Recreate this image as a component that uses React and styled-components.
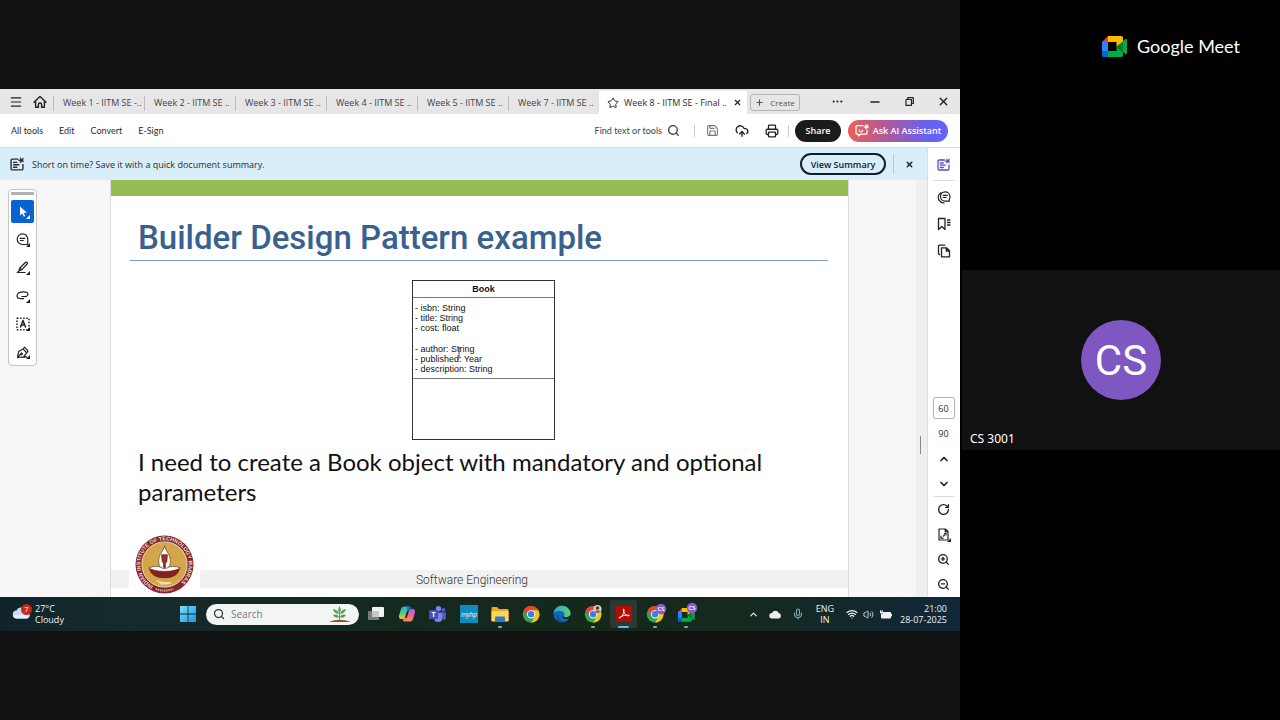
import React from 'react';
import styled, { createGlobalStyle, css } from 'styled-components';
import {
  Menu, Search, Star, X, Plus, Minus, Printer, Save, CloudUpload, Ellipsis,
  ChevronUp, ChevronDown, RotateCw, ZoomIn, ZoomOut, Wifi, Volume2, Mic,
} from 'lucide-react';

const GlobalStyle = createGlobalStyle`
  * {
    box-sizing: border-box;
  }

  body {
    margin: 0;
    background: #000;
    font-family: "Open Sans", "Noto Sans", sans-serif;
    font-size: 9px;
  }

  button, input {
    font: inherit;
    color: inherit;
    border: 0;
    padding: 0;
    margin: 0;
    background: none;
  }

  svg {
    display: block;
    flex: none;
  }
`;

const Page = styled.div`
  display: grid;
  grid-template-columns: 3fr 1fr;
  min-height: 100vh;
`;

const Stage = styled.main`
  display: flex;
  align-items: center;
  background: #111;
  min-width: 0;
`;

const Desktop = styled.div`
  display: flex;
  flex-direction: column;
  width: 100%;
  min-width: 0;
  color: #2c2c2c;
`;

/* tab strip */

const TabStrip = styled.header`
  display: flex;
  align-items: stretch;
  height: 25px;
  background: #e6e6e6;
`;

const IconButton = styled.button`
  display: flex;
  align-items: center;
  justify-content: center;
  width: ${props => props.$w || 24}px;
  height: ${props => props.$h ? `${props.$h}px` : 'auto'};
  color: ${props => props.$color || '#222'};
`;

const StripStart = styled.div`
  display: flex;
  padding-left: 4px;
  width: 53px;
`;

const Tab = styled.button`
  width: 91px;
  padding: 2px 0 0 10px;
  text-align: left;
  white-space: nowrap;
  overflow: hidden;
  color: #444;
  background: linear-gradient(#bbb, #bbb) left 7px / 1px 15px no-repeat;
`;

const ActiveTab = styled.div`
  display: flex;
  align-items: center;
  gap: 5px;
  width: 148px;
  margin-top: 2px;
  padding: 0 3px 0 8px;
  white-space: nowrap;
  background: #fff;

  button:first-of-type {
    margin-right: auto;
  }
`;

const CreateButton = styled.button`
  display: flex;
  align-items: center;
  justify-content: center;
  align-self: center;
  gap: 6px;
  width: 50px;
  height: 17px;
  margin: 2px auto 0 3px;
  border: 1px solid #b4b4b4;
  border-radius: 3px;
  font-size: 8px;
  color: #555;
`;

/* toolbar */

const Toolbar = styled.div`
  display: flex;
  align-items: center;
  height: 34px;
  padding: 0 12px 0 11px;
  background: #fff;
  border-bottom: 1px solid #dcdfe2;
`;

const MenuBar = styled.nav`
  display: flex;
  gap: 16px;
  margin-right: auto;
  font-family: Lato, "Open Sans", sans-serif;
`;

const FindButton = styled.button`
  display: flex;
  align-items: center;
  gap: 5px;
  margin-right: 14px;
  font-family: Lato, "Open Sans", sans-serif;
  color: #444;
`;

const Divider = styled.span`
  width: 1px;
  height: ${props => props.$h || 12}px;
  background: ${props => props.$color || '#ccc'};
`;

const Pill = styled.button`
  display: flex;
  align-items: center;
  justify-content: center;
  gap: 4px;
  height: 22px;
  width: ${props => props.$w}px;
  border-radius: 11px;
  font-weight: 600;
  white-space: nowrap;

  ${props => props.$kind === 'dark' && css`
    color: #fff;
    background: #1b1b1b;
    margin: 0 7px 0 6px;
  `}

  ${props => props.$kind === 'ai' && css`
    color: #fff;
    background: linear-gradient(90deg, #ee5f55, #a35aa6 45%, #6562f5 80%);
  `}

  ${props => props.$kind === 'outline' && css`
    border: 2px solid #12202a;
    color: #12202a;
    margin-right: 7px;
  `}
`;

/* viewer */

const Viewer = styled.div`
  display: flex;
  background: #fff;
`;

const ViewerMain = styled.div`
  flex: 1;
  min-width: 0;
`;

const Banner = styled.div`
  display: flex;
  align-items: center;
  height: 32px;
  padding: 0 3px 0 10px;
  background: #d9eefb;

  p {
    margin: 0 auto 0 8px;
  }
`;

const Canvas = styled.div`
  display: flex;
  background: #f7f7f7;
`;

const ToolGutter = styled.div`
  width: 110px;
  padding: 9px 8px;
`;

const ToolPalette = styled.div`
  display: flex;
  flex-direction: column;
  align-items: center;
  gap: 5px;
  width: 29px;
  padding: 2px 0;
  background: #fff;
  border: 1px solid #c6c6c6;
  border-radius: 4px;
`;

const Grip = styled.span`
  width: 23px;
  height: 3px;
  background: #b1b1b1;
`;

const Tool = styled.button`
  display: flex;
  align-items: center;
  justify-content: center;
  width: 23px;
  height: 23px;
  border-radius: 2px;
  color: ${props => props.$active ? '#fff' : '#222'};
  background: ${props => props.$active ? '#0862d1' : 'none'};
`;

const ScrollTrack = styled.div`
  width: 11px;
  margin-left: 67px;
  padding: 256px 0 0 4px;
  background: #efefef;
`;

const ScrollThumb = styled.div`
  width: 1px;
  height: 18px;
  background: #888;
`;

const Rail = styled.aside`
  display: flex;
  flex-direction: column;
  align-items: center;
  justify-content: space-between;
  width: 33px;
  padding: 3px 1px 0 0;
  border-left: 1px solid #ddd;
`;

const RailGroup = styled.div`
  display: flex;
  flex-direction: column;
  align-items: center;

  hr {
    width: 22px;
    margin: ${props => props.$loose ? '2px 0' : 0};
    border: 0;
    border-top: 1px solid #ddd;
  }
`;

const PageInput = styled.input`
  width: 22px;
  height: 22px;
  margin-bottom: 2px;
  text-align: center;
  border: 1px solid #b5b5b5;
  border-radius: 2px;
`;

const PageCount = styled.span`
  line-height: 25px;
`;

/* slide */

const Slide = styled.article`
  display: flex;
  flex-direction: column;
  flex: 1;
  min-width: 0;
  background: #fff;
  border: solid #ddd;
  border-width: 0 1px;
`;

const SlideAccent = styled.div`
  height: 16px;
  background: #97bb55;
`;

const SlideTitle = styled.h1`
  margin: 20px 20px 19px 19px;
  padding: 0 0 1px 8px;
  border-bottom: 1px solid #7f9fc4;
  font-family: Roboto, sans-serif;
  font-weight: 500;
  font-size: 33px;
  line-height: 43px;
  color: #39618f;
`;

const ClassBox = styled.section`
  position: relative;
  width: 143px;
  height: 160px;
  margin-left: 301px;
  border: 1px solid #333;
  font-family: "Liberation Sans", Arial, sans-serif;
  font-size: 9px;
  line-height: 10px;
  color: #111;

  h2 {
    margin: 0;
    font-size: 9px;
    line-height: 16px;
    text-align: center;
    border-bottom: 1px solid #777;
  }

  ul {
    list-style: none;
    margin: 0;
    padding: 5px 2px 4px;
    border-bottom: 1px solid #777;
  }

  li:nth-child(4) {
    margin-top: 11px;
  }
`;

const TextCursor = styled.svg`
  position: absolute;
  left: 43px;
  top: 66px;
`;

const SlideText = styled.p`
  margin: 7px 27px 0;
  font-family: Lato, sans-serif;
  font-size: 24px;
  line-height: 30px;
  color: #111;
`;

const SlideFooter = styled.footer`
  display: flex;
  align-items: flex-end;
  margin-top: 28px;
  padding-bottom: 3px;
`;

const FooterBand = styled.div`
  flex: ${props => props.$w ? `0 0 ${props.$w}px` : 1};
  height: 18px;
  margin-bottom: 6px;
  padding-left: ${props => props.$w ? 0 : 216}px;
  background: #f1f1f1;
  font-family: Roboto, sans-serif;
  font-weight: 300;
  font-size: 12px;
  line-height: 20px;
  color: #333;
`;

const SealHolder = styled.div`
  padding: 0 6px;
`;

/* taskbar */

const Taskbar = styled.footer`
  display: flex;
  align-items: center;
  height: 34px;
  padding-right: 13px;
  color: #f2f2f2;
  line-height: 11px;
  background: linear-gradient(90deg, #10232b, #152a2c 12%, #14291f 38%, #16281c 62%, #15291f 78%, #10283a);
`;

const Weather = styled.button`
  display: flex;
  align-items: center;
  gap: 2px;
  width: 172px;
  padding-left: 11px;
  text-align: left;
`;

const SearchBox = styled.label`
  display: flex;
  align-items: center;
  gap: 6px;
  width: 153px;
  height: 21px;
  margin: 0 1px 0 2px;
  padding: 0 8px 0 7px;
  border-radius: 11px;
  background: #f3f5f4;
  color: #333;

  input {
    flex: 1;
    min-width: 0;
    font-size: 10px;
    outline: none;
  }

  input::placeholder {
    color: #777;
  }
`;

const TaskButton = styled.button`
  display: flex;
  flex-direction: column;
  align-items: center;
  justify-content: flex-end;
  gap: 3px;
  width: 27px;
  height: 28px;
  margin: 0 2px;
  border-radius: 3px;
  background: ${props => props.$active ? '#2a3a33' : 'none'};

  &::after {
    content: '';
    width: ${props => props.$active ? 11 : 4}px;
    height: 2px;
    border-radius: 1px;
    background: ${props => props.$active ? '#5cc0ea' : props.$open ? '#9a9f9d' : 'transparent'};
  }
`;

const Tray = styled.div`
  display: flex;
  align-items: center;
  margin-left: auto;
`;

const Language = styled.button`
  width: 32px;
  line-height: 11px;
  margin-right: 2px;
`;

const Clock = styled.div`
  width: 52px;
  text-align: right;
`;

/* meet panel */

const MeetPanel = styled.aside`
  display: grid;
  grid-template-rows: 1fr auto 1fr;
  padding-left: 2px;
  color: #fff;
`;

const MeetBrand = styled.div`
  display: flex;
  align-items: center;
  align-self: start;
  justify-content: flex-end;
  gap: 10px;
  padding: 34px 40px 0 0;
  font-family: Lato, sans-serif;
  font-size: 18px;
  line-height: 24px;
`;

const Tile = styled.section`
  position: relative;
  display: flex;
  align-items: center;
  justify-content: center;
  min-height: 180px;
  background: #111;
`;

const Avatar = styled.div`
  width: 80px;
  height: 80px;
  border-radius: 50%;
  background: #7e57c2;
  font-family: Roboto, sans-serif;
  font-size: 42px;
  line-height: 82px;
  text-align: center;
`;

const TileName = styled.span`
  position: absolute;
  left: 8px;
  bottom: 3px;
  font-family: "Noto Sans", sans-serif;
  font-size: 12px;
  line-height: 16px;
`;

const Line = styled.svg.attrs({ fill: 'none', stroke: 'currentColor', strokeLinecap: 'round', strokeLinejoin: 'round' })`
  overflow: visible;
`;

const HomeIcon = () => (
  <Line width="14" height="14" viewBox="0 0 14 14" strokeWidth="1.4">
    <path d="M1 7.2 7 1.5l6 5.7M2.6 6v6.2h2.8V9.6a1.6 1.6 0 0 1 3.2 0v2.6h2.8V6" />
  </Line>
);

const SummaryIcon = ({ size = 13 }) => (
  <Line width={size} height={size} viewBox="0 0 13 13" strokeWidth="1.3">
    <path d="M7.5 2H2.2Q1 2 1 3.2v7.6Q1 12 2.2 12h8.6q1.2 0 1.2-1.2V7M3.3 5h3M3.3 7.2h5M3.3 9.5h3" />
    <path fill="currentColor" strokeWidth=".5" d="m10 .8.7 1.5L12.5 1l-.6 2 .9 1.3-1.8-.1L9.8 5.5l-.3-1.7-1.7-.6 1.7-.8z" />
  </Line>
);

const AssistantIcon = () => (
  <Line width="14" height="13" viewBox="0 0 14 13" strokeWidth="1.3">
    <path d="M8 1.7H2.2Q1 1.7 1 2.9v6q0 1.2 1.2 1.2h1.3v2l2.3-2h5q1.2 0 1.2-1.2V6.5M4.2 5.9h.1M7.4 5.9h.1M4.3 7.3q1.6 1 3.2 0" />
    <path fill="currentColor" strokeWidth=".5" d="m10.8.5.6 1.5L13.3 1l-.6 1.9 1 1.2-1.8-.1-1.2 1.3-.3-1.7-1.7-.5 1.7-.8z" />
  </Line>
);

const RestoreIcon = () => (
  <Line width="9" height="9" viewBox="0 0 9 9" strokeWidth="1.2">
    <path d="M1 2.5h5.5V8.3H1zM2.7 2.3V.7h5.6v5.8H6.7" />
  </Line>
);

const Corner = () => <path d="M15 11v4h-4z" fill="currentColor" stroke="none" />;

const ToolIcon = ({ children }) => (
  <Line width="16" height="16" viewBox="0 0 16 16" strokeWidth="1.2">
    {children}
    <Corner />
  </Line>
);

const tools = [
  ['Select', <path fill="currentColor" stroke="none" d="M5 2.5v9l2.3-2 1.5 3.2 1.4-.7-1.5-3.1 3.1-.3z" />],
  ['Comment', <path d="M12.7 12.5H7.5a5.3 5.3 0 1 1 5.3-5.2zM5.3 6.3h4.5M5.3 8.5h3" />],
  ['Highlight', <path d="m4 11 .8-3 5.8-5.7q1.5-.5 1.9 1.2L6.9 9.7zM5 8.2l1.8 1.6M2.2 12.5h8M4 11l-1.5 1.3" />],
  ['Draw', <path d="M8.5 10.7H5.6C3 10.7 1.8 9.2 2 7.5c.3-2.4 3-3.7 6.5-3.7 3 0 4.6 1.2 4.4 2.7-.2 1.4-2 2.2-4.5 2H6.8" />],
  ['Add text', (
    <>
      <path strokeWidth="1.5" strokeDasharray="1.5 1.6" strokeLinecap="butt" d="M2 2.3h12v11.5H2z" />
      <path strokeWidth="1.5" d="m5.5 11 2.5-6.5L10.5 11M6.5 9h3" />
    </>
  )],
  ['Sign', <path d="m2.5 13.5 1.2-6 4.4-2.6 3.6 4-3 4zM8.1 4.9l1.6-1.7 3.3 3.7-1.3 2M2.5 13.5l4-4.4M6.5 9.1a.8.8 0 1 0 .1 0M9 13.5q2-1.5 3-.2" />],
];

const CommentsIcon = () => (
  <Line width="14" height="14" viewBox="0 0 14 14" strokeWidth="1.2">
    <path d="M12.3 11.2H8.3A4.7 4.7 0 1 1 12.9 6.4q.1 1.600-.6 2.600zM6.3 5.3h4M6.3 7.5h3M4 2.7C.5 4.5.2 9.5 3.5 11.8q1.2 1 3.5 1.1" />
  </Line>
);

const BookmarksIcon = () => (
  <Line width="14" height="14" viewBox="0 0 14 14" strokeWidth="1.3">
    <path d="M1.5 1.5h6.5v11L4.8 9.6l-3.3 2.9zM10.5 3H13M10.5 5.5H13M10.5 8H13" />
  </Line>
);

const PagesIcon = () => (
  <Line width="14" height="14" viewBox="0 0 14 14" strokeWidth="1.3">
    <path d="M4.5 3.8h5l3 3v6h-8zM9.3 4v3h3M2.5 10.5q-1-.2-1-1.2V2.5q0-1.3 1.3-1.3h5" />
  </Line>
);

const PageViewIcon = () => (
  <Line width="16" height="16" viewBox="0 0 16 16" strokeWidth="1.2">
    <path d="M3 2h6.5L12 4.5V13H3zM9.2 2.2v2.6H12M5 9.2v2h2M10 8V6.5H8.5M7.5 9l1-1" />
    <Corner />
  </Line>
);

const Seal = () => (
  <svg width="59" height="59" viewBox="0 0 60 60">
    <defs>
      <path id="seal-arc" d="M18.6 51.8A24.6 24.6 0 1 1 41.4 51.8" />
    </defs>
    <circle cx="30" cy="30" r="29.5" fill="#84272b" />
    <circle cx="30" cy="30" r="23" fill="#d3a64c" stroke="#ecd9b4" strokeWidth="1" />
    <text fill="#f3dfd3" fontFamily="Liberation Sans, sans-serif" fontWeight="700" fontSize="5.5">
      <textPath href="#seal-arc">INDIAN INSTITUTE OF TECHNOLOGY MADRAS</textPath>
    </text>
    <path d="M21 54.8q9 3.6 18 0" fill="none" stroke="#d9a79c" strokeWidth="2" strokeDasharray="1.5 .7" />
    <path d="M30 11c-1 6-6 8-6 15 0 5 2 9 6 9s6-4 6-9c0-7-5-9-6-15z" fill="#fff" stroke="#5b4a3a" strokeWidth=".8" />
    <path d="M27 20h6l-.6 7-1.4 2v4h-2v-4l-1.4-2z" fill="#a92a20" stroke="#4c1512" strokeWidth=".6" />
    <path d="M14 33.5q8-3.5 14.5.5h3q6.5-4 14.5-.5-5 3.5-16 3.5t-16-3.5z" fill="#fff" stroke="#5b3a2a" strokeWidth=".7" />
    <path d="M14 34q16 6 32 0-3 10-16 10T14 34z" fill="#84211f" />
    <path d="M22 46.5q7 3.5 14 1.5M25 49.5q6 1 12-1" fill="none" stroke="#f4e5b8" strokeWidth="1.2" />
  </svg>
);

const WeatherIcon = () => (
  <svg width="22" height="20" viewBox="0 0 22 20">
    <path d="M6 14.5a4 4 0 0 1-.5-8 5 5 0 0 1 9.3.6 3.8 3.8 0 0 1 1.2 7.4z" fill="#c6dcf7" />
    <path d="M2.2 11.5q9-1 16.5-.8-.6 3.8-3 3.8H6q-3.2 0-3.8-3z" fill="#e6f0fc" />
    <circle cx="15.5" cy="5.5" r="5.5" fill="#c42b1c" />
    <text x="15.5" y="8.2" textAnchor="middle" fontSize="7.5" fill="#fff">7</text>
  </svg>
);

const WindowsIcon = () => (
  <svg width="16" height="16" viewBox="0 0 16 16">
    <linearGradient id="win" x1="0" y1="0" x2="1" y2="1">
      <stop stopColor="#7ddcfb" />
      <stop offset="1" stopColor="#159be6" />
    </linearGradient>
    <path fill="url(#win)" d="M0 0h7.6v7.6H0zM8.4 0H16v7.6H8.4zM0 8.4h7.6V16H0zM8.4 8.4H16V16H8.4z" />
  </svg>
);

const PlantIcon = () => (
  <svg width="23" height="17" viewBox="0 0 23 17">
    <path d="M1 16q10-4.5 22 0z" fill="#8a5333" />
    <g fill="#4fa052">
      <path d="M11.5 0q2.5 4 0 7.5Q9 4 11.5 0zM5 3q4.5.5 6 5Q6 7.5 5 3zM18 3q-4.5.5-6 5 5-.5 6-5zM5 9q4-1.5 6.2 2Q7.5 13 5 9zM18 9q-4-1.5-6.2 2 3.7 2 6.2-2z" />
      <path d="M11 5h1v9.5h-1z" />
    </g>
  </svg>
);

const Badge = ({ x = 15, y = 4 }) => (
  <g>
    <circle cx={x} cy={y} r="5.2" fill="#8460c4" />
    <text x={x} y={y + 2} textAnchor="middle" fontSize="6" fontWeight="600" fill="#fff">CS</text>
  </g>
);

const Glyph = styled.svg.attrs({ width: 18, height: 18, viewBox: '0 0 18 18' })`
  overflow: visible;
`;

const TaskView = () => (
  <Glyph>
    <rect x="1" y="6" width="11" height="9" fill="#777d7d" />
    <rect x="5" y="2" width="12" height="10" rx="1" fill="#f0f2f2" />
    <rect x="5" y="6" width="7" height="6" fill="#c5c9c9" />
  </Glyph>
);

const Copilot = () => (
  <Glyph>
    <linearGradient id="cop-a" x1="0" y1="0" x2="0" y2="1">
      <stop stopColor="#2aa7ea" /><stop offset=".5" stopColor="#52c777" /><stop offset="1" stopColor="#f2c230" />
    </linearGradient>
    <linearGradient id="cop-b" x1="0" y1="0" x2="0" y2="1">
      <stop stopColor="#a56af0" /><stop offset=".5" stopColor="#f0609a" /><stop offset="1" stopColor="#f5904a" />
    </linearGradient>
    <path d="M6 1.5h5q1.6 0 2 1.6l.5 1.9H11q-1.6 0-2.2 1.6L7 12.5q-.6 1.5-2 1.5H3.5C1 14 .6 12 1.2 10L3 4q.7-2.5 3-2.5z" fill="url(#cop-a)" />
    <path d="M12 16.5H7q-1.6 0-2-1.6L4.6 13H7q1.6 0 2.2-1.6L11 5.5Q11.6 4 13 4h1.5c2.5 0 2.9 2 2.3 4L15 14q-.7 2.5-3 2.5z" fill="url(#cop-b)" />
    <path d="M11 1.5q1.6 0 2 1.6l.5 1.9H11q-1 0-1.5.8L9 3q0-1.5 2-1.5z" fill="#2564c8" />
  </Glyph>
);

const Teams = () => (
  <Glyph>
    <circle cx="14.5" cy="5" r="2" fill="#5059c9" />
    <circle cx="9.5" cy="3.7" r="2.7" fill="#7b83eb" />
    <path d="M12 7.5h5v5q0 2.5-3 2.5z" fill="#5059c9" />
    <path d="M5 7.5h8.5v5q0 4.5-4.3 4.5T5 12.5z" fill="#7b83eb" />
    <rect x="0" y="5" width="9" height="9" rx="1" fill="#464eb8" />
    <text x="4.5" y="12" textAnchor="middle" fontSize="7" fontWeight="700" fill="#fff">T</text>
  </Glyph>
);

const MyHp = () => (
  <Glyph>
    <rect width="18" height="18" fill="#0e8cc0" />
    <text x="9" y="11.5" textAnchor="middle" fontSize="6.5" fontStyle="italic" fill="#fff">myhp</text>
  </Glyph>
);

const Explorer = () => (
  <Glyph>
    <path d="M.5 3q0-1 1-1H6l2 2h8.5q1 0 1 1v11H.5z" fill="#e9a820" />
    <path d="M.5 6h17v9.5q0 1-1 1h-15q-1 0-1-1z" fill="#fbd55c" />
    <path d="M4 16.5v-4q0-1 1-1h8q1 0 1 1v4z" fill="#2b7cc4" />
  </Glyph>
);

const Chrome = ({ children }) => (
  <Glyph>
    <g transform="translate(0 .2) scale(.38)">
      <circle cx="24" cy="24" r="22" fill="#34a350" />
      <path d="M4.95 13a22 22 0 0 1 38.1 0H24v11l-9.5 5.5z" fill="#e94435" />
      <path d="M43.05 13A22 22 0 0 1 24 46l9.5-16.5L24 24V13z" fill="#fbc116" />
      <circle cx="24" cy="24" r="11" fill="#fff" />
      <circle cx="24" cy="24" r="8.5" fill="#3c7de6" />
    </g>
    {children}
  </Glyph>
);

const Edge = () => (
  <Glyph>
    <linearGradient id="edge" x1="0" y1="0" x2="1" y2="0">
      <stop stopColor="#2aa5e0" /><stop offset="1" stopColor="#5dd267" />
    </linearGradient>
    <circle cx="9" cy="9" r="8.5" fill="#1466b8" />
    <path d="M.6 8A8.5 8.5 0 0 1 17.5 8.5q0 3.8-4 3.8-2.8 0-2.5-1.5.7-1 .2-2.5C10 5.3 4 4.5.6 8z" fill="url(#edge)" />
    <path d="M9.5 12.8q2.5 2.2 6.5.7l1 1.5 1-3-1-1.5q-2 2.3-5 1.7-1.5-.3-1-1.7-1.8.8-1.5 2.3z" fill="#14291f" />
    <path d="M6 8.5c-2 4 1 8 5.5 8.5a8.5 8.5 0 0 1-4-.2C3.5 15.5 2.5 11 6 8.5z" fill="#0c4691" />
  </Glyph>
);

const Acrobat = () => (
  <Glyph>
    <rect x="1" y="1" width="16" height="16" rx="2" fill="#b30b00" />
    <path d="M4.5 13c2.5-1 4.7-4.5 4.6-8.2 0-1-1-1-.9 0 .3 3.4 2.8 6 5.5 6.2.8 0 .8-.9 0-.9-3-.2-6.5.6-9 2-.8.5-.6 1.1-.2.9z" fill="none" stroke="#fff" strokeWidth=".9" />
  </Glyph>
);

const MeetShape = () => (
  <>
    <path d="M0 6 6 0v6z" fill="#ea4335" />
    <path d="M0 6h6v9H0z" fill="#2684fc" />
    <path d="M0 15h6v6H1.5Q0 21 0 19.5z" fill="#0066da" />
    <path d="M6 0h13q2 0 2 2v4.5L14.5 11V6H6z" fill="#ffba00" />
    <path d="M6 15h8.5v-4.5L21 16v3q0 2-2 2H6z" fill="#00ac47" />
    <path d="m14.5 10.5 9-7.3q1.5-.8 1.5.8v13q0 1.6-1.5.8z" fill="#00832d" />
    <path d="m21 5.3 2.5-2.1q1.5-.8 1.5.8v13q0 1.6-1.5.8L21 15.7z" fill="#10a544" />
  </>
);

const MeetTask = () => (
  <Glyph>
    <g transform="translate(1 3) scale(.66)"><MeetShape /></g>
    <Badge x={15} y={3} />
  </Glyph>
);

const ChromeProfile = () => (
  <Chrome>
    <circle cx="13.5" cy="4" r="4" fill="#d7d2cd" />
    <circle cx="13.5" cy="3" r="1.8" fill="#4a3c36" />
    <path d="M10.5 6.5q3-3 6 0-3 3-6 0z" fill="#8f6a5b" />
  </Chrome>
);

const ChromeCs = () => <Chrome><Badge /></Chrome>;

const apps = [
  { name: 'Task view', icon: TaskView },
  { name: 'Copilot', icon: Copilot },
  { name: 'Teams', icon: Teams },
  { name: 'myHP', icon: MyHp },
  { name: 'File Explorer', icon: Explorer, open: true },
  { name: 'Chrome', icon: Chrome },
  { name: 'Edge', icon: Edge },
  { name: 'Chrome profile', icon: ChromeProfile, open: true },
  { name: 'Acrobat', icon: Acrobat, active: true },
  { name: 'Chrome CS', icon: ChromeCs, open: true },
  { name: 'Meet', icon: MeetTask, open: true },
];

const tabs = [
  'Week 1 - IITM SE -..',
  'Week 2 - IITM SE ..',
  'Week 3 - IITM SE ..',
  'Week 4 - IITM SE ..',
  'Week 5 - IITM SE ..',
  'Week 7 - IITM SE ..',
];

const fields = [
  'isbn: String', 'title: String', 'cost: float',
  'author: String', 'published: Year', 'description: String',
];

const TopTabs = () => (
  <TabStrip>
    <StripStart>
      <IconButton aria-label="Menu"><Menu size={14} strokeWidth={2} /></IconButton>
      <IconButton $w={27} aria-label="Home"><HomeIcon /></IconButton>
    </StripStart>
    {tabs.map(tab => <Tab key={tab}>{tab}</Tab>)}
    <ActiveTab>
      <Star size={12} strokeWidth={2} />
      <button>Week 8 - IITM SE - Final ..</button>
      <IconButton $w={14} aria-label="Close tab"><X size={9} strokeWidth={3} /></IconButton>
    </ActiveTab>
    <CreateButton><Plus size={9} strokeWidth={3} />Create</CreateButton>
    <IconButton $w={40} aria-label="More"><Ellipsis size={13} /></IconButton>
    <IconButton $w={35} aria-label="Minimize"><Minus size={14} strokeWidth={2.5} /></IconButton>
    <IconButton $w={34} aria-label="Restore"><RestoreIcon /></IconButton>
    <IconButton $w={34} aria-label="Close"><X size={13} strokeWidth={2.5} /></IconButton>
  </TabStrip>
);

const MainToolbar = () => (
  <Toolbar>
    <MenuBar>
      <button>All tools</button>
      <button>Edit</button>
      <button>Convert</button>
      <button>E-Sign</button>
    </MenuBar>
    <FindButton>Find text or tools <Search size={13} strokeWidth={2.5} /></FindButton>
    <Divider />
    <IconButton $w={34} $color="#777" aria-label="Save"><Save size={13} /></IconButton>
    <IconButton $w={26} aria-label="Upload"><CloudUpload size={14} strokeWidth={2.3} /></IconButton>
    <IconButton $w={33} aria-label="Print"><Printer size={14} strokeWidth={2.2} /></IconButton>
    <Divider />
    <Pill $kind="dark" $w={46}>Share</Pill>
    <Pill $kind="ai" $w={100}><AssistantIcon />Ask AI Assistant</Pill>
  </Toolbar>
);

const SlidePage = () => (
  <Slide>
    <SlideAccent />
    <SlideTitle>Builder Design Pattern example</SlideTitle>
    <ClassBox>
      <h2>Book</h2>
      <ul>
        {fields.map(field => <li key={field}>- {field}</li>)}
      </ul>
      <TextCursor width="6" height="13" viewBox="0 0 6 13" fill="none" stroke="#555">
        <path d="M1 .5q2 0 2 1.5v9q0 1.5-2 1.5M5 .5Q3 .5 3 2" />
      </TextCursor>
    </ClassBox>
    <SlideText>I need to create a Book object with mandatory and optional parameters</SlideText>
    <SlideFooter>
      <FooterBand $w={18} />
      <SealHolder><Seal /></SealHolder>
      <FooterBand>Software Engineering</FooterBand>
    </SlideFooter>
  </Slide>
);

const SideRail = () => (
  <Rail>
    <RailGroup $loose>
      <IconButton $h={27} $color="#5a49c8" aria-label="Summary"><SummaryIcon /></IconButton>
      <hr />
      <IconButton $h={27} aria-label="Comments"><CommentsIcon /></IconButton>
      <IconButton $h={27} aria-label="Bookmarks"><BookmarksIcon /></IconButton>
      <IconButton $h={27} aria-label="Pages"><PagesIcon /></IconButton>
    </RailGroup>
    <RailGroup>
      <PageInput aria-label="Page" defaultValue="60" />
      <PageCount>90</PageCount>
      <IconButton $h={25} aria-label="Previous page"><ChevronUp size={12} strokeWidth={3.5} /></IconButton>
      <IconButton $h={25} aria-label="Next page"><ChevronDown size={12} strokeWidth={3.5} /></IconButton>
      <hr />
      <IconButton $h={25} aria-label="Rotate"><RotateCw size={13} strokeWidth={2.4} /></IconButton>
      <IconButton $h={25} aria-label="Page view"><PageViewIcon /></IconButton>
      <IconButton $h={25} aria-label="Zoom in"><ZoomIn size={13} strokeWidth={2.4} /></IconButton>
      <IconButton $h={25} aria-label="Zoom out"><ZoomOut size={13} strokeWidth={2.4} /></IconButton>
    </RailGroup>
  </Rail>
);

const WindowsTaskbar = () => (
  <Taskbar>
    <Weather><WeatherIcon /><span>27°C<br />Cloudy</span></Weather>
    <IconButton $w={32} aria-label="Start"><WindowsIcon /></IconButton>
    <SearchBox>
      <Search size={12} strokeWidth={2.5} />
      <input type="text" placeholder="Search" aria-label="Search" />
      <PlantIcon />
    </SearchBox>
    {apps.map(({ name, icon: AppIcon, open, active }) => (
      <TaskButton key={name} aria-label={name} $open={open} $active={active}>
        <AppIcon />
      </TaskButton>
    ))}
    <Tray>
      <IconButton $w={22} $color="#eee" aria-label="Hidden icons"><ChevronUp size={11} strokeWidth={2.5} /></IconButton>
      <IconButton $w={23} aria-label="OneDrive">
        <svg width="13" height="9" viewBox="0 0 13 9">
          <path d="M3 8.5a2.7 2.7 0 0 1 0-5.4 3.6 3.6 0 0 1 6.7 0 2.8 2.8 0 0 1 .3 5.4z" fill="#eceeed" />
        </svg>
      </IconButton>
      <IconButton $w={22} $color="#7fa9b8" aria-label="Microphone"><Mic size={12} strokeWidth={2.3} /></IconButton>
      <Language>ENG<br />IN</Language>
      <IconButton $w={17} $color="#eee" aria-label="Network"><Wifi size={12} strokeWidth={2.5} /></IconButton>
      <IconButton $w={16} $color="#ddd" aria-label="Volume"><Volume2 size={11} strokeWidth={2} /></IconButton>
      <IconButton $w={19} aria-label="Battery">
        <svg width="12" height="9" viewBox="0 0 12 9">
          <path d="M3 2h7q1 0 1 1v.8h1v2.4h-1V7.5q0 1-1 1H2q-1 0-1-1V4h2z" fill="#f0f0f0" />
          <path d="M0 0h.8v1.5h1V0h.8v1.5h.4v2H0z" fill="#f0f0f0" />
        </svg>
      </IconButton>
      <Clock>21:00<br />28-07-2025</Clock>
    </Tray>
  </Taskbar>
);

export default function App() {
  return (
    <Page>
      <GlobalStyle />
      <Stage>
        <Desktop>
          <TopTabs />
          <MainToolbar />
          <Viewer>
            <ViewerMain>
              <Banner>
                <SummaryIcon size={14} />
                <p>Short on time? Save it with a quick document summary.</p>
                <Pill $kind="outline" $w={86}>View Summary</Pill>
                <Divider $h={20} $color="#b5c8d4" />
                <IconButton $w={30} aria-label="Dismiss"><X size={9} strokeWidth={4} /></IconButton>
              </Banner>
              <Canvas>
                <ToolGutter>
                  <ToolPalette>
                    <Grip />
                    {tools.map(([name, shape], i) => (
                      <Tool key={name} aria-label={name} $active={i === 0}>
                        <ToolIcon>{shape}</ToolIcon>
                      </Tool>
                    ))}
                  </ToolPalette>
                </ToolGutter>
                <SlidePage />
                <ScrollTrack><ScrollThumb /></ScrollTrack>
              </Canvas>
            </ViewerMain>
            <SideRail />
          </Viewer>
          <WindowsTaskbar />
        </Desktop>
      </Stage>
      <MeetPanel>
        <MeetBrand>
          <svg width="25" height="21" viewBox="0 0 25 21"><MeetShape /></svg>
          <span>Google Meet</span>
        </MeetBrand>
        <Tile>
          <Avatar>CS</Avatar>
          <TileName>CS 3001</TileName>
        </Tile>
      </MeetPanel>
    </Page>
  );
}
